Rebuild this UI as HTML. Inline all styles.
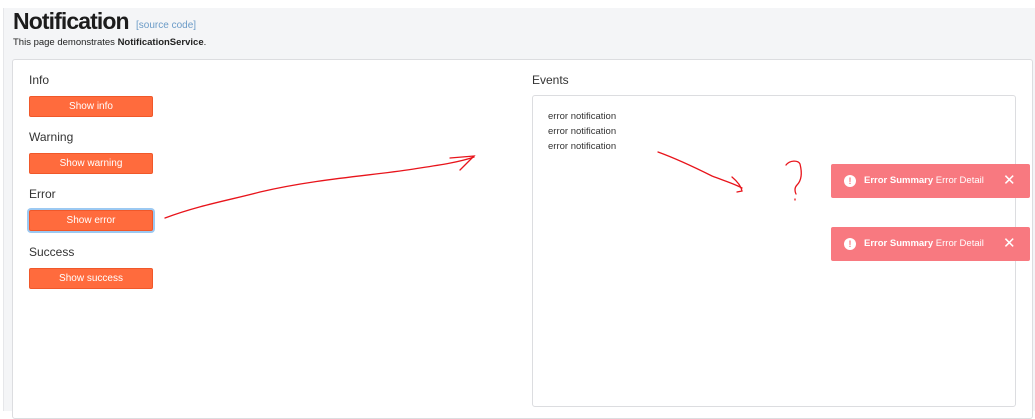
<!DOCTYPE html>
<html><head><meta charset="utf-8"><style>
*{margin:0;padding:0;box-sizing:border-box}
body{width:1035px;height:411px;overflow:hidden;background:#fff;font-family:"Liberation Sans",sans-serif;color:#222;position:relative}
.bg{position:absolute;left:3px;top:8px;width:1032px;height:403px;background:#f4f5f7;border-left:1px solid #e6e7ea}
h1{position:absolute;left:13px;top:8px;font-size:23px;font-weight:bold;color:#1c1c1c;letter-spacing:-0.9px}
.src{position:absolute;left:136px;top:20px;font-size:10px;color:#6b9bc7}
.desc{position:absolute;left:13px;top:37px;font-size:9.5px;color:#222}
.card{position:absolute;left:12px;top:59px;width:1021px;height:360px;background:#fff;border:1px solid #dcdde0;border-radius:3px}
.lbl{position:absolute;left:29px;font-size:12px;color:#333}
.btn{position:absolute;left:29px;width:124px;height:21px;background:#ff6b3d;border:1px solid #f0582a;border-radius:2px;color:#fff;font-size:10px;text-align:center;line-height:19px}
.ev{position:absolute;left:532px;top:95px;width:484px;height:312px;border:1px solid #dcdde0;border-radius:3px;background:#fff}
.ev div{position:absolute;left:15px;font-size:9.5px;color:#333}
.toast{position:absolute;left:831px;width:199px;height:34px;background:#f87980;border-radius:2px;color:#fff;font-size:9.5px}
.toast .ic{position:absolute;left:13px;top:11px;width:12px;height:12px;border-radius:50%;background:#fff;color:#f87980;font-size:9px;font-weight:bold;text-align:center;line-height:12px}
.toast .t{position:absolute;left:33px;top:11px}
.toast .x{position:absolute;left:172px;top:7px;font-size:15px}
</style></head><body>
<div class="bg"></div>
<h1>Notification</h1>
<div class="src">[source code]</div>
<div class="desc">This page demonstrates <b>NotificationService</b>.</div>
<div class="card"></div>
<div class="lbl" style="top:73px">Info</div>
<div class="btn" style="top:96px">Show info</div>
<div class="lbl" style="top:130px">Warning</div>
<div class="btn" style="top:153px">Show warning</div>
<div class="lbl" style="top:187px">Error</div>
<div class="btn" style="top:210px;box-shadow:0 0 0 2px #9cc9f2">Show error</div>
<div class="lbl" style="top:245px">Success</div>
<div class="btn" style="top:268px">Show success</div>
<div class="lbl" style="left:532px;top:73px">Events</div>
<div class="ev">
<div style="top:15px">error notification</div>
<div style="top:30px">error notification</div>
<div style="top:45px">error notification</div>
</div>
<div class="toast" style="top:164px"><span class="ic">!</span><span class="t"><b>Error Summary</b> Error Detail</span><span class="x">✕</span></div>
<div class="toast" style="top:227px"><span class="ic">!</span><span class="t"><b>Error Summary</b> Error Detail</span><span class="x">✕</span></div>
<svg style="position:absolute;left:0;top:0" width="1035" height="411" fill="none" stroke="#e8141b" stroke-width="1.3" stroke-linecap="round">
<path d="M165 218 C200 205 230 200 260 192 C320 178 380 175 420 168 C440 165 460 162 474 157"/>
<path d="M450 158 L474 156 L460 170"/>
<path d="M658 152 C680 160 700 170 712 176 C725 181 735 184 742 188"/>
<path d="M732 177 C738 182 741 186 742 191 L737 192"/>
<path d="M786 165 C790 160 798 160 800 164 C802 172 802 180 797 185 C794 188 795 192 796 194"/>
<path d="M795 199 L795 200"/>
</svg>
</body></html>
